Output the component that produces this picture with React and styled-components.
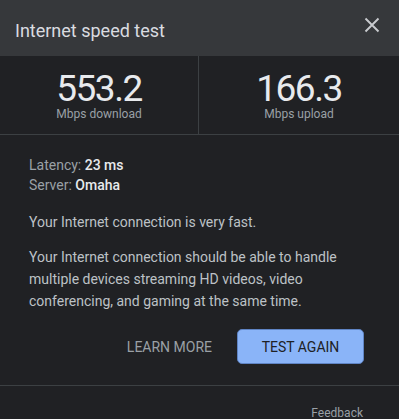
import React from "react";
import styled, { createGlobalStyle } from "styled-components";

const GlobalStyle = createGlobalStyle`
    html, body {
        margin: 0;
        padding: 0;
        background: #202124;
    }
    * {
        box-sizing: border-box;
    }
`;

const Panel = styled.div`
    width: 399px;
    height: 419px;
    overflow: hidden;
    background: #202124;
    font-family: Roboto, "Liberation Sans", Arial, sans-serif;
    color: #bdc1c6;
`;

const Header = styled.div`
    height: 56px;
    background: #36383b;
    display: flex;
    align-items: center;
    justify-content: space-between;
    padding: 4px 15px 0 15px;
`;

const Title = styled.div`
    font-size: 18px;
    color: #dadce0;
`;

const CloseButton = styled.button`
    align-self: flex-start;
    margin-top: 9px;
    border: none;
    outline: none;
    background: none;
    padding: 4px;
    display: flex;
    cursor: pointer;
    color: #c9cbcf;
`;

const Stats = styled.div`
    display: grid;
    grid-template-columns: 198px 1fr;
    height: 79px;
    border-bottom: 1px solid #3c4043;
`;

const Stat = styled.div`
    display: flex;
    flex-direction: column;
    align-items: center;
    padding-top: 15px;
    border-left: ${props => (props.$divided ? "1px solid #3c4043" : "none")};
`;

const Value = styled.div`
    font-size: 37px;
    line-height: 36px;
    letter-spacing: -1.5px;
    color: #e8eaed;
`;

const Unit = styled.div`
    font-size: 12px;
    line-height: 12px;
    margin-top: 1px;
    color: #9aa0a6;
`;

const Body = styled.div`
    padding: 20px 29px 0;
    font-size: 14px;
    line-height: 22px;
`;

const Meta = styled.div`
    line-height: 20px;
    color: #9aa0a6;

    b {
        font-weight: 500;
        color: #e8eaed;
    }
`;

const Paragraph = styled.p`
    margin: ${props => props.$gap}px 0 0;
    color: #bdc1c6;
`;

const Actions = styled.div`
    display: flex;
    justify-content: flex-end;
    align-items: center;
    gap: 25px;
    padding: 17px 35px 21px 0;
    border-bottom: 1px solid #3c4043;
`;

const TextButton = styled.button`
    border: none;
    outline: none;
    background: none;
    font-family: inherit;
    font-size: 14px;
    color: #9aa0a6;
    padding: 0;
    cursor: pointer;
`;

const PrimaryButton = styled.button`
    border: 1px solid #5f84c4;
    outline: none;
    background: #8ab4f8;
    font-family: inherit;
    font-size: 14px;
    color: #202124;
    width: 127px;
    height: 35px;
    border-radius: 5px;
    cursor: pointer;
`;

const Footer = styled.div`
    display: flex;
    justify-content: flex-end;
    padding: 20px 36px 0 0;
`;

const FeedbackLink = styled.a`
    font-size: 12px;
    line-height: 14px;
    color: #9aa0a6;
    text-decoration: none;
`;

const CloseIcon = () => (
    <svg width="16" height="16" viewBox="0 0 16 16">
        <path d="M1.5 1.5L14.5 14.5M14.5 1.5L1.5 14.5" stroke="currentColor" strokeWidth="1.9" />
    </svg>
);

const stats = [
    { value: "553.2", unit: "Mbps download" },
    { value: "166.3", unit: "Mbps upload" },
];

export default function App() {
    return (
        <Panel>
            <GlobalStyle />
            <Header>
                <Title>Internet speed test</Title>
                <CloseButton aria-label="Close">
                    <CloseIcon />
                </CloseButton>
            </Header>
            <Stats>
                {stats.map((stat, i) => (
                    <Stat key={stat.unit} $divided={i > 0}>
                        <Value>{stat.value}</Value>
                        <Unit>{stat.unit}</Unit>
                    </Stat>
                ))}
            </Stats>
            <Body>
                <Meta>
                    Latency: <b>23 ms</b>
                    <br />
                    Server: <b>Omaha</b>
                </Meta>
                <Paragraph $gap={16}>Your Internet connection is very fast.</Paragraph>
                <Paragraph $gap={13}>
                    Your Internet connection should be able to handle multiple devices
                    streaming HD videos, video conferencing, and gaming at the same time.
                </Paragraph>
            </Body>
            <Actions>
                <TextButton>LEARN MORE</TextButton>
                <PrimaryButton>TEST AGAIN</PrimaryButton>
            </Actions>
            <Footer>
                <FeedbackLink href="#">Feedback</FeedbackLink>
            </Footer>
        </Panel>
    );
}
